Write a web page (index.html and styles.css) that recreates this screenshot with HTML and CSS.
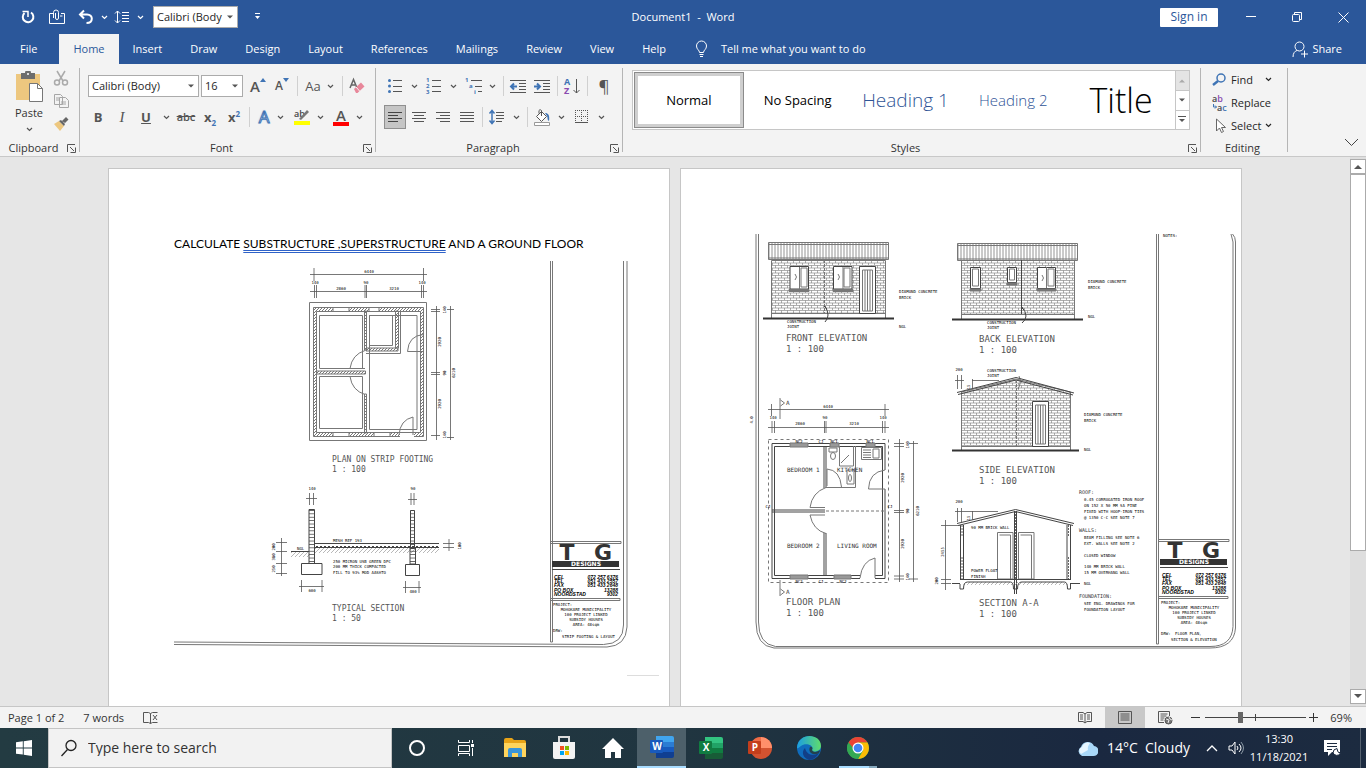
FILE: index.html
```html
<!DOCTYPE html>
<html lang="en">
<head>
<meta charset="utf-8">
<title>Document1 - Word</title>
<link rel="stylesheet" href="styles.css">
</head>
<body>
<svg class="defs" aria-hidden="true">
  <symbol id="chev" viewBox="0 0 7 5"><path d="M1 1l2.500 2.500L6 1" fill="none" stroke="currentColor" stroke-width="1.200"/></symbol>
  <symbol id="tri" viewBox="0 0 6 4"><path d="M0 .5h6L3 3.500z" fill="currentColor"/></symbol>
  <symbol id="launch" viewBox="0 0 9 9"><path d="M.5 8V.5H8M3 3l4 4M8.500 3.500v5h-5" fill="none" stroke="#555"/></symbol>
</svg>
<div class="app">
  <header class="titlebar">
    <div class="quick">
      <button class="qbtn" aria-label="Repeat"><svg width="16" height="16" fill="none" stroke="currentColor" stroke-width="2"><path d="M11 3.500A5.300 5.300 0 1 1 4.500 4"/><path d="M2.500 2.500H8V8" stroke-width="1.500"/></svg></button>
      <button class="qbtn" aria-label="Attach"><svg width="18" height="16" fill="none" stroke="currentColor"><path d="M5 4.500H1.500v10h15v-10H13M12 7h2.500"/><path d="M5.500 9V3.500a2.500 2.500 0 0 1 5 0V9a1.500 1.500 0 0 1-3 0V4"/></svg></button>
      <button class="qbtn" aria-label="Undo"><svg width="16" height="16" fill="none" stroke="currentColor" stroke-width="2"><path d="M6 1.500L2 5.500l4 4M2.500 5.500H9c6.500 0 6.500 8.500-.5 8.500"/></svg></button>
      <button class="drop" aria-label="Undo list"><svg width="7" height="5"><use href="#chev"/></svg></button>
      <button class="qbtn" aria-label="Line spacing"><svg width="16" height="16" fill="none" stroke="currentColor"><path d="M3.500 2v12M1 4.500L3.500 2 6 4.500M1 11.500L3.500 14 6 11.500M8 3.500h7M8 6.500h7M8 9.500h7M8 12.500h7"/></svg></button>
      <button class="drop" aria-label="Spacing list"><svg width="7" height="5"><use href="#chev"/></svg></button>
      <label class="combo quick-font"><select aria-label="Quick font"><option>Calibri (Body</option></select><svg width="6" height="4"><use href="#tri"/></svg></label>
      <button class="drop more" aria-label="Customize"><svg width="7" height="8" fill="currentColor"><path d="M1 0h5v1H1zM1 3h5L3.500 6z"/></svg></button>
    </div>
    <h1 class="doc-title">Document1&nbsp; -&nbsp; Word</h1>
    <div class="window">
      <button class="signin">Sign in</button>
      <button class="wbtn" aria-label="Minimize"><svg width="10" height="10"><path d="M0 4.500h10" stroke="#fff"/></svg></button>
      <button class="wbtn" aria-label="Restore"><svg width="11" height="11" fill="none" stroke="#fff"><rect x=".5" y="2.500" width="7" height="7" rx="1"/><path d="M2.500 2V.5h7v7H8"/></svg></button>
      <button class="wbtn" aria-label="Close"><svg width="11" height="11"><path d="M.5.5l10 10M10.500.5l-10 10" stroke="#fff"/></svg></button>
    </div>
  </header>
  <nav class="tabs">
    <a class="tab file" href="#">File</a><a class="tab active" href="#">Home</a><a class="tab" href="#">Insert</a><a class="tab" href="#">Draw</a><a class="tab" href="#">Design</a><a class="tab" href="#">Layout</a><a class="tab" href="#">References</a><a class="tab" href="#">Mailings</a><a class="tab" href="#">Review</a><a class="tab" href="#">View</a><a class="tab" href="#">Help</a>
    <a class="tell" href="#"><svg width="13" height="18" fill="none" stroke="#fff"><path d="M4.500 12.500c0-2.500-3-3-3-6.500a5 5 0 0 1 10 0c0 3.500-3 4-3 6.500zM4.500 14.500h4M5 16.500h3"/></svg>Tell me what you want to do</a>
    <a class="share" href="#"><svg width="16" height="17" fill="none" stroke="#fff"><circle cx="7.500" cy="5.500" r="4.500"/><path d="M1 16c0-4 2-6 4-6.500M12.500 9.500v7M9 13h7"/></svg>Share</a>
  </nav>

  <section class="ribbon">
    <div class="group clipboard">
      <div class="gbody">
        <button class="paste"><svg width="29" height="32"><path d="M1 3h24v26H1z" fill="#edc77f"/><path d="M6 2h4a3 3 0 0 1 6 0h4v6H6z" fill="#6d6d6d"/><circle cx="13" cy="3" r="1" fill="#fff"/><path d="M14.500 12.500h8l5 5v13h-13z" fill="#fff" stroke="#777"/><path d="M22.500 12.500v5h5" fill="none" stroke="#777"/></svg>Paste<svg width="7" height="5"><use href="#chev"/></svg></button>
        <div class="clip-col">
          <button aria-label="Cut"><svg width="16" height="16" fill="none" stroke="#aaa" stroke-width="1.500"><path d="M4 1l6 10M12 1L6 11"/><circle cx="4" cy="12.500" r="2.500"/><circle cx="12" cy="12.500" r="2.500"/></svg></button>
          <button aria-label="Copy"><svg width="16" height="16" fill="#f3f3f3" stroke="#a6a6a6"><path d="M1.500 1.500h6l2 2v8h-8zM6.500 4.500h6l3 3v7h-9z"/><path d="M3 5h3M3 7h3M8 9h5M8 11h5"/></svg></button>
          <button aria-label="Format painter"><svg width="16" height="16"><path d="M1 8l5-3 5 5-4 5z" fill="#edc77f"/><path d="M6 5l2-1 4 4-1 2zM9 5l4-4 2.500 2.500L12 7z" fill="#666"/></svg></button>
        </div>
      </div>
      <div class="gname"><span>Clipboard</span><button aria-label="Clipboard options"><svg width="9" height="9"><use href="#launch"/></svg></button></div>
    </div>

    <div class="group font">
      <div class="gbody rows">
        <div class="row">
          <label class="combo family"><select aria-label="Font"><option>Calibri (Body)</option></select><svg width="6" height="4"><use href="#tri"/></svg></label>
          <label class="combo size"><select aria-label="Font size"><option>16</option></select><svg width="6" height="4"><use href="#tri"/></svg></label>
          <button class="ib grow" aria-label="Grow font"><b class="big">A</b><svg width="6" height="4"><path d="M0 4l3-4 3 4z" fill="#3f74b5"/></svg></button>
          <button class="ib grow" aria-label="Shrink font"><b>A</b><svg width="6" height="4"><path d="M0 0h6L3 4z" fill="#3f74b5"/></svg></button>
          <i class="sep"></i>
          <button class="ib wide case">Aa<svg width="7" height="5"><use href="#chev"/></svg></button>
          <i class="sep"></i>
          <button class="ib" aria-label="Clear formatting"><svg width="16" height="16"><path d="M1 10L4.500 1.500 8 10M2.500 7H6" fill="none" stroke="#666" stroke-width="1.500"/><path d="M5 11l7-6.500 3.500 4-7 6.500H7z" fill="#e8879a"/><path d="M7 9l4 4.500" stroke="#f3f3f3"/></svg></button>
        </div>
        <div class="row">
          <button class="ib"><b>B</b></button>
          <button class="ib serif"><i>I</i></button>
          <button class="ib"><b><u>U</u></b></button>
          <button class="drop" aria-label="Underline list"><svg width="7" height="5"><use href="#chev"/></svg></button>
          <button class="ib small"><s>abc</s></button>
          <button class="ib"><b>x<sub>2</sub></b></button>
          <button class="ib"><b>x<sup>2</sup></b></button>
          <i class="sep"></i>
          <button class="ib effect">A</button>
          <button class="drop tight" aria-label="Effects list"><svg width="7" height="5"><use href="#chev"/></svg></button>
          <button class="ib mark" aria-label="Highlight"><svg width="18" height="18"><text x="1" y="9" class="marktext">ab</text><path d="M6 11l8-9 2 2-8 8z" fill="#777"/><path d="M1 13h16v4H1z" fill="#ff0"/></svg></button>
          <button class="drop tight" aria-label="Highlight list"><svg width="7" height="5"><use href="#chev"/></svg></button>
          <button class="ib tint">A</button>
          <button class="drop tight" aria-label="Colour list"><svg width="7" height="5"><use href="#chev"/></svg></button>
        </div>
      </div>
      <div class="gname"><span>Font</span><button aria-label="Font options"><svg width="9" height="9"><use href="#launch"/></svg></button></div>
    </div>

    <div class="group para">
      <div class="gbody rows">
        <div class="row">
          <button class="ib" aria-label="Bullets"><svg width="16" height="16"><g fill="#3f74b5"><circle cx="2.500" cy="2.500" r="1.500"/><circle cx="2.500" cy="8" r="1.500"/><circle cx="2.500" cy="13.500" r="1.500"/></g><path d="M6 2.500h9M6 8.500h9M6 13.500h9" stroke="#555"/></svg></button>
          <button class="drop" aria-label="Bullet list"><svg width="7" height="5"><use href="#chev"/></svg></button>
          <button class="ib" aria-label="Numbering"><svg width="16" height="16"><g class="nums"><text x="0" y="4">1</text><text x="0" y="10">2</text><text x="0" y="16">3</text></g><path d="M6 2.500h9M6 8.500h9M6 13.500h9" stroke="#555"/></svg></button>
          <button class="drop" aria-label="Number list"><svg width="7" height="5"><use href="#chev"/></svg></button>
          <button class="ib" aria-label="Multilevel list"><svg width="17" height="17"><g class="nums"><text x="0" y="4">1</text><text x="4" y="10">a</text><text x="9" y="16">i</text></g><path d="M6 2.500h11M10 8.500h7M13 13.500h4" stroke="#555"/></svg></button>
          <button class="drop" aria-label="Level list"><svg width="7" height="5"><use href="#chev"/></svg></button>
          <i class="sep"></i>
          <button class="ib" aria-label="Decrease indent"><svg width="16" height="15"><path d="M0 1.500h16M9 4.500h7M9 7.500h7M9 10.500h7M0 13.500h16" stroke="#555"/><path d="M7 7.500H1M4 4.500l-3 3 3 3" fill="none" stroke="#3f74b5" stroke-width="2"/></svg></button>
          <button class="ib" aria-label="Increase indent"><svg width="16" height="15"><path d="M0 1.500h16M9 4.500h7M9 7.500h7M9 10.500h7M0 13.500h16" stroke="#555"/><path d="M0 7.500h6M3 4.500l3 3-3 3" fill="none" stroke="#3f74b5" stroke-width="2"/></svg></button>
          <i class="sep"></i>
          <button class="ib" aria-label="Sort"><svg width="16" height="17"><text x="0" y="7" class="sorta">A</text><text x="0" y="16" class="sortz">Z</text><path d="M12.500 1v14M9.500 12l3 3 3-3" fill="none" stroke="#555"/></svg></button>
          <i class="sep"></i>
          <button class="ib pil">¶</button>
        </div>
        <div class="row second">
          <button class="ib on" aria-label="Align left"><svg width="14" height="12" stroke="#444"><path d="M0 1.500h14M0 4.500h10M0 7.500h14M0 10.500h10"/></svg></button>
          <button class="ib" aria-label="Centre"><svg width="14" height="12" stroke="#555"><path d="M0 1.500h14M2 4.500h10M0 7.500h14M2 10.500h10"/></svg></button>
          <button class="ib" aria-label="Align right"><svg width="14" height="12" stroke="#555"><path d="M0 1.500h14M4 4.500h10M0 7.500h14M4 10.500h10"/></svg></button>
          <button class="ib" aria-label="Justify"><svg width="14" height="12" stroke="#555"><path d="M0 1.500h14M0 4.500h14M0 7.500h14M0 10.500h14"/></svg></button>
          <i class="sep"></i>
          <button class="ib" aria-label="Line and paragraph spacing"><svg width="16" height="16" fill="none"><path d="M7 3.500h8M7 6.500h8M7 9.500h8M7 12.500h6" stroke="#555"/><path d="M3 2v12M.5 4.500L3 1.500l2.500 3M.5 11.500L3 14.500l2.500-3" stroke="#3f74b5" stroke-width="1.500"/></svg></button>
          <button class="drop" aria-label="Line spacing list"><svg width="7" height="5"><use href="#chev"/></svg></button>
          <i class="sep"></i>
          <button class="ib" aria-label="Shading"><svg width="17" height="17"><path d="M2.500 7.500l5-5 5 5-5 5zM7.500 7V1.500a1.500 1.500 0 0 0-2.500 0v3" fill="#fff" stroke="#555"/><path d="M11 4c3 0 5 2 4 8-2-1-1-3-2-5z" fill="#3f74b5"/><path d="M.5 13.500h15v3H.5z" fill="#fff" stroke="#999"/></svg></button>
          <button class="drop" aria-label="Shading list"><svg width="7" height="5"><use href="#chev"/></svg></button>
          <button class="ib borders" aria-label="Borders"><svg width="14" height="14" fill="none" stroke="#555"><path d="M0 .5h14M0 6.500h14M.5 0v13M6.500 0v13M12.500 0v13" stroke-dasharray="1 1"/><path d="M0 12.500h13"/></svg></button>
          <button class="drop" aria-label="Borders list"><svg width="7" height="5"><use href="#chev"/></svg></button>
        </div>
      </div>
      <div class="gname"><span>Paragraph</span><button aria-label="Paragraph options"><svg width="9" height="9"><use href="#launch"/></svg></button></div>
    </div>

    <div class="group styles">
      <div class="gbody">
        <div class="gallery">
          <button class="style chosen">Normal</button><button class="style">No Spacing</button><button class="style h1s">Heading 1</button><button class="style h2s">Heading 2</button><button class="style ts">Title</button>
          <div class="gscroll">
            <button class="dim" aria-label="Up"><svg width="6" height="4"><path d="M0 3.500h6L3 .5z" fill="#aaa"/></svg></button>
            <button aria-label="Down"><svg width="6" height="4"><use href="#tri"/></svg></button>
            <button aria-label="More styles"><svg width="8" height="7"><path d="M0 .5h8" stroke="#555"/><path d="M1 3h6L4 6z" fill="#555"/></svg></button>
          </div>
        </div>
      </div>
      <div class="gname"><span>Styles</span><button aria-label="Styles options"><svg width="9" height="9"><use href="#launch"/></svg></button></div>
    </div>

    <div class="group editing">
      <div class="gbody edit-list">
        <button><svg width="15" height="14" fill="none" stroke="#3f74b5"><circle cx="9" cy="5" r="4" stroke-width="1.500"/><path d="M6 8l-5 4" stroke-width="2.500"/></svg>Find<svg class="gap" width="7" height="5"><use href="#chev"/></svg></button>
        <button><svg width="15" height="16"><text x="0" y="7" class="rep">a<tspan class="pur">b</tspan></text><text x="5" y="16" class="rep">a<tspan class="blu">c</tspan></text><path d="M1.500 9v3h3M3 10.500l1.500 1.500L3 13.500" fill="none" stroke="#3f74b5"/></svg>Replace</button>
        <button><svg width="15" height="15"><path d="M4.500 1v12l3-3 2 4.500 2-1-2-4h4z" fill="#fff" stroke="#666"/></svg>Select<svg width="7" height="5"><use href="#chev"/></svg></button>
      </div>
      <div class="gname"><span>Editing</span></div>
    </div>
    <div class="ribbon-end"><button aria-label="Collapse ribbon"><svg width="15" height="9"><path d="M1 1l6.500 6.500L14 1" fill="none" stroke="#444"/></svg></button></div>
  </section>

  <main class="workspace">
    <div class="pages">
      <article class="page">
        <p class="heading">CALCULATE <span>SUBSTRUCTURE ,SUPERSTRUCTURE</span> AND A GROUND FLOOR</p>
        <svg class="sheet" viewBox="109 255 560 451">
          <defs>
            <pattern id="hatch" width="3" height="3" patternUnits="userSpaceOnUse"><path d="M0 3L3 0" stroke="#555" stroke-width=".8"/></pattern>
            <pattern id="soil" width="4" height="4" patternUnits="userSpaceOnUse"><path d="M0 4L4 0" stroke="#999" stroke-width=".7"/></pattern>
            <pattern id="course" width="6" height="3.400" patternUnits="userSpaceOnUse"><path d="M0 0H6" stroke="#333" stroke-width="1.400"/></pattern>
            <g id="block" class="block">
              <path d="M550 541.500h71v2h-71M550 598.500h70v2h-70"/>
              <path d="M552 569.500h68" class="dark"/>
              <text x="567" y="560" class="logo">T</text><text x="603" y="560" class="logo">G</text>
              <path d="M552 561h67v6h-67z" class="bar"/>
              <text x="586" y="566" class="designs">DESIGNS</text>
              <g class="contact"><text x="554" y="579">CEL</text><text x="554" y="583">TEL</text><text x="554" y="587">FAX</text><text x="554" y="592">PO BOX</text><text x="554" y="596">NOORDSTAD</text></g>
              <g class="contact end"><text x="618" y="579">072 257 6376</text><text x="618" y="583">051 433 2557</text><text x="618" y="587">051 433 2648</text><text x="618" y="592">13288</text><text x="618" y="596">9302</text></g>
              <g class="tiny"><text x="553" y="606">PROJECT:</text><g class="mid"><text x="586" y="611">MOHOKARE MUNICIPALITY</text><text x="586" y="616">100 PROJECT LINKED</text><text x="586" y="621">SUBSIDY HOUSES</text><text x="586" y="626">AREA: 48sqm</text></g></g>
            </g>
          </defs>
          <g class="ink">
            <path d="M550.500 261v381h2V261M623.500 261v364q0 19-20 19.500L174 642M627 261v366q-1 19-20 20L174 644.500"/>
            <path d="M627 675.500h32" class="faint"/>
            <use href="#block"/>
            <!-- strip footing plan -->
            <path d="M309.500 302.500h117v138h-117z"/>
            <path d="M313.500 307.500h110v129h-110zM316.500 311.500v121h104v-121z" fill="url(#hatch)" fill-rule="evenodd"/>
            <path d="M333 307.500h16v4h-16zM333 432.500h16v4h-16zM369 307.500h10v4h-10zM374 432.500h16v4h-16z" fill="#fff"/>
            <path d="M319.500 315.500h43v53h-43zM319.500 376.500h43v52h-43zM369.500 315.500h47.500v114h-47.500zM369.500 315.500h23v30h-23z"/>
            <path d="M364.500 311h2v39h-2zM364.500 394h2v39h-2zM316.500 371h49v3h-49zM366 348h32v3h-32zM395.500 311h3v37h-3z" fill="url(#hatch)"/>
            <path d="M366 353.500h34.500V311"/>
            <path d="M400 433h14v4h-14z" fill="#fff" class="nos"/>
            <path d="M365 350.500q-13 4-15 18h15M350 376.500q2 14 15 18M423.500 334.500q-15 1-16 17h16M399 435q1-15 14-18v18"/>
            <path d="M310 274.500h117M310 291.500h117M314 268v13M423.500 268v13M314.500 285v13M316.500 285v13M365 285v13M366.500 285v13M421.500 285v13M423.500 285v13M436.500 306v134M450.500 306v134M431 309.500h9M431 311.500h9M431 372.500h9M431 374.500h9M431 435.500h9M447 309.500h7M447 437.500h7" class="dim-line"/>
            <g class="tiny mid"><text x="369" y="273">6440</text><text x="315" y="284">140</text><text x="366" y="284">90</text><text x="422" y="284">140</text><text x="341" y="290">2860</text><text x="394" y="290">3210</text>
              <text transform="translate(446 310) rotate(-90)">140</text><text transform="translate(441 342) rotate(-90)">2920</text><text transform="translate(446 373) rotate(-90)">90</text><text transform="translate(441 404) rotate(-90)">2920</text><text transform="translate(446 435) rotate(-90)">140</text><text transform="translate(455 373) rotate(-90)">6210</text></g>
            <g class="cap1"><text x="332" y="462">PLAN ON STRIP FOOTING</text><text x="332" y="472">1 : 100</text><text x="332" y="611">TYPICAL SECTION</text><text x="332" y="621">1 : 50</text></g>
            <!-- typical section -->
            <path d="M315 548h124v5H315zM291 552h18v5h-18z" fill="url(#soil)" class="nos"/>
            <path d="M309 509.500h5.500v54H309zM410.500 510.500h4v38h-4zM410 548h5.500v16H410z" fill="url(#course)" class="dark"/>
            <path d="M301.500 563.500h20.500v11h-20.500zM405.500 564.500h14v11h-14zM314.500 543.500H439M314.500 547.500H439M291 551.500h18" class="dark"/>
            <path d="M316 546.500h122" stroke-dasharray="2 2" class="dark"/>
            <path d="M306 498.500h11M309.500 493v12M313.500 493v12M408 499.500h9M411 493v12M414 493v12M281.500 538v38M276 542.500h11M276 551.500h11M276 563.500h11M276 573.500h11M299 586.500h25M301.500 580v12M322 580v12M403 587.500h18M405.500 581v12M419 581v12M443 543.500h11M443 547.500h11M449 539v12" class="dim-line"/>
            <g class="tiny"><g class="mid"><text x="312" y="490">140</text><text x="413" y="490">90</text><text x="312" y="592">600</text><text x="413" y="593">400</text><text transform="translate(275 547) rotate(-90)">200</text><text transform="translate(275 557) rotate(-90)">380</text><text transform="translate(275 569) rotate(-90)">250</text><text transform="translate(461 546) rotate(-90)">100</text></g><text x="297" y="550">NGL</text><text x="333" y="542">MESH REF 193</text><text x="333" y="563">250 MICRON USB GREEN DPC</text><text x="333" y="568">200 MM THICK COMPACTED</text><text x="333" y="574">FILL TO 93% MOD AASHTO</text><text x="553" y="632">DRW:</text><text x="562" y="638">STRIP FOOTING &amp; LAYOUT</text></g>
          </g>
        </svg>
      </article>
      <article class="page second-page">
        <svg class="sheet" viewBox="681 169 560 537">
          <defs>
            <pattern id="brick" width="6" height="5" patternUnits="userSpaceOnUse"><path d="M0 .5H6M0 3H6M1.500.5V3M4.500 3v2.500" stroke="#777" stroke-width=".6"/></pattern>
            <pattern id="sheeting" width="3" height="9" patternUnits="userSpaceOnUse"><path d="M1 0V9" stroke="#777" stroke-width=".8"/></pattern>
          </defs>
          <g class="ink">
            <path d="M756 234v388q0 24 18 26H1210q24 0 25.500-20V242q0-5-3-8M758.500 234v388q0 22 17 24.500H1210q22 0 23-20V242l-2-8M1156.500 234v410h2V234"/>
            <use href="#block" transform="translate(608 -2)"/>
            <!-- front elevation -->
            <path d="M768.500 242.500h120v17h-120z" fill="url(#sheeting)"/><path d="M768 244.500h121M768 258h121"/>
            <path d="M771.500 260.500h114v53h-114z" fill="url(#brick)"/><path d="M771.500 313v5M885.500 313v5"/>
            <path d="M763 318.500h131" class="thick"/>
            <path d="M790 266.500h18.500v22.500H790zM833.500 266.500H852v22.500h-18.500zM859.500 266.500h16v47h-16z" fill="#fff" class="dark"/>
            <path d="M799.500 267v22M801 268h6v19h-6zM843 267v22M844 268h6v19h-6zM795 274q3 3 0 6M838 274q3 3 0 6"/>
            <path d="M789 289.500h20v2h-20zM833 289.500h20v2h-20z" fill="#777"/>
            <path d="M862.500 270h10v41h-10zM865 270v41M867.500 270v41M870 270v41"/>
            <path d="M824.500 260v53" stroke-dasharray="3 1"/><path d="M824 306l3 3M825 306q6 10 0 16" class="dark"/>
            <!-- back elevation -->
            <path d="M957.500 243.500h120v17h-120z" fill="url(#sheeting)"/><path d="M957 245.500h121M957 259h121"/>
            <path d="M961.500 260.500h113v54h-113z" fill="url(#brick)"/><path d="M961.500 314v5M1074.500 314v5"/>
            <path d="M952 319.500h131" class="thick"/>
            <path d="M970.500 267.500h10v21h-10zM1007.500 267.500h9v15h-9zM1037.500 267.500h18v21h-18z" fill="#fff" class="dark"/>
            <path d="M972.500 269h6v17h-6zM1009.500 269h5v11h-5zM1046.500 267v21M1048 269h6v17h-6zM1042 275q3 3 0 6"/>
            <path d="M970 289h11v2h-11zM1007 283h10v2h-10zM1037 289h19v2h-19z" fill="#777"/>
            <path d="M1021.500 260v54M1021 307l3 3M1022 307q8 10 0 16" class="dark"/>
            <!-- side elevation -->
            <path d="M961.500 392L1016 379l54.500 13v54.500h-109z" fill="url(#brick)"/><path d="M961.500 446v5M1070.500 446v5"/>
            <path d="M957 392.500L1016 377.500l58 15.500M958 394.500L1016 380l57 15" class="dark"/>
            <path d="M952 450.500h127" class="thick"/>
            <path d="M1032.500 401.500h16v45h-16z" fill="#fff" class="dark"/><path d="M1035.500 405h10v39h-10zM1038 405v39M1040.500 405v39M1043 405v39"/>
            <path d="M1016.500 380v67" stroke-dasharray="3 1"/><path d="M1019 376q3 6-1 13M972 380.500h27M957.500 375v14M961.500 375v14M955 380.500h9M972.500 379v10" class="dim-line"/>
            <!-- floor plan -->
            <path d="M768.500 439.500h120v143h-120z" stroke-dasharray="3 3"/>
            <path d="M772 443.500h113v135H772zM774.500 446.500h108v129h-108z" class="dark"/>
            <path d="M824 446v42M826 446v42M824 533v43M826 533v43M772 510h53M772 512h53" class="dark"/>
            <path d="M826 511h59" stroke-dasharray="3 2"/>
            <path d="M790 443h18v4h-18zM790 575h18v4h-18zM830 443h9v4h-9zM866 443h9v4h-9zM834 575h17v4h-17z" fill="#999"/>
            <path d="M883 470h3v19h-3zM860 575h15v4h-15z" fill="#fff" class="nos"/>
            <path d="M826 487.500q-14 5-16 20h15M810 515h15M810 515q3 15 16 18.500M885 470q-16 2-16.500 19H885M860 578q2-17 15-20v20M827 486v-17q13 1 14.500 18M826 487.500h29.500V446M839.500 446v20h14v-20M841 463l8-8M847 470v14h7v-14z"/>
            <path d="M829 448h8v4h-8zM861.500 447.500h20v12h-20zM873 449h6v9h-6zM863 450h8M863 452.500h8M863 455h8M863 457.500h8"/><ellipse cx="833" cy="456" rx="2.500" ry="3.500"/><ellipse cx="850" cy="478" rx="1.500" ry="3.500"/>
            <path d="M768 409.500h121M768 427.500h121M771.500 404v12M885 404v12M772 421v12M774.500 421v12M824.500 421v12M826 421v12M882.500 421v12M885 421v12M899.500 439v143M913.500 441v141M894 443.500h10M894 446.500h10M894 510.500h10M894 512.500h10M894 576h10M894 579h10M909 443.500h9M909 579h9M780 398v21M780 580v16M780.500 400l4 3-4 3M780.500 589l4 3-4 3" class="dim-line"/>
            <!-- section -->
            <path d="M957 523.500l58.500-14 58.500 14M958 525.500l57.500-14 57.500 14M960.500 525v55M963.500 525v55M1067 525v55M1070.500 525v55M1014.500 511v83M1016.500 511v83" class="dark"/>
            <path d="M962 525v12M962 557v22M1068.500 525v12M1068.500 557v22M1015.500 511v69" stroke-dasharray="2 1" class="fill-wall"/>
            <path d="M963.500 582h104v3h-104z" fill="url(#soil)" class="nos"/>
            <path d="M997.500 532.500H1013V579h-15.500zM999.500 535h11v44M1018.500 532.500H1034V579h-15.500zM1020.500 535h11v44"/>
            <path d="M961 579.500h109M960 584v5h3.500q0-7 4-7h43q3 0 3 7h4q0-7 4-7h43q3 0 3 7h3v-5M952 583.500h8M1070 583.500h10" class="dark"/>
            <path d="M945.500 520v70M941 525.500h20M941 579.500h10M941 583.500h10M957.500 508v14M961.500 508v14M955 511.500h43M972.500 511v9" class="dim-line"/>
            <g class="tiny">
              <text x="787" y="323">CONSTRUCTION</text><text x="787" y="328">JOINT</text><text x="899" y="293">DIAMOND CONCRETE</text><text x="899" y="299">BRICK</text><text x="899" y="328">NGL</text>
              <text x="987" y="324">CONSTRUCTION</text><text x="987" y="329">JOINT</text><text x="1088" y="283">DIAMOND CONCRETE</text><text x="1088" y="289">BRICK</text><text x="1088" y="318">NGL</text>
              <text x="987" y="372">CONSTRUCTION</text><text x="987" y="377">JOINT</text><text x="1084" y="416">DIAMOND CONCRETE</text><text x="1084" y="422">BRICK</text><text x="1084" y="451">NGL</text>
              <text x="1163" y="237">NOTES:</text><text x="971" y="529">90 MM BRICK WALL</text><text x="971" y="572">POWER FLOAT</text><text x="971" y="578">FINISH</text>
              <text x="1084" y="501">0.45 CORRUGATED IRON ROOF</text><text x="1084" y="507">ON 152 X 50 MM SA PINE</text><text x="1084" y="513">FIXED WITH HOOP-IRON TIES</text><text x="1084" y="519">@ 1350 C-C SEE NOTE 7</text>
              <text x="1084" y="539">BEAM FILLING SEE NOTE 6</text><text x="1084" y="545">EXT. WALLS SEE NOTE 2</text><text x="1084" y="557">CLOSED WINDOW</text><text x="1084" y="568">140 MM BRICK WALL</text><text x="1084" y="574">15 MM OVERHANG WALL</text><text x="1084" y="585">NGL</text><text x="1084" y="605">SEE ENG. DRAWINGS FOR</text><text x="1084" y="611">FOUNDATION LAYOUT</text>
              <text x="1161" y="635">DRW:</text><text x="1175" y="635">FLOOR PLAN,</text><text x="1171" y="641">SECTION &amp; ELEVATION</text>
              <g class="mid"><text x="828" y="408">6440</text><text x="773" y="419">140</text><text x="825" y="419">90</text><text x="883" y="419">140</text><text x="800" y="425">2860</text><text x="854" y="425">3210</text><text x="799" y="443">NC2</text><text x="821" y="443">CJ</text><text x="834" y="443">NC1</text><text x="870" y="443">NC1</text><text x="799" y="583">NC2</text><text x="821" y="583">CJ</text><text x="843" y="583">NC2</text><text x="768" y="508">CJ</text><text x="890" y="508">CJ</text><text x="959" y="371">200</text><text x="959" y="503">200</text>
                <text transform="translate(909 445) rotate(-90)">140</text><text transform="translate(904 478) rotate(-90)">2920</text><text transform="translate(909 511) rotate(-90)">90</text><text transform="translate(904 544) rotate(-90)">2920</text><text transform="translate(909 577) rotate(-90)">140</text><text transform="translate(919 511) rotate(-90)">6210</text><text transform="translate(944 552) rotate(-90)">2455</text><text transform="translate(938 581) rotate(-90)">200</text><text transform="translate(970 387) rotate(-90)">15</text><text transform="translate(970 518) rotate(-90)">15</text><text transform="translate(753 420) rotate(-90)">4.0</text></g>
            </g>
            <g class="note"><text x="1079" y="494">ROOF:</text><text x="1079" y="532">WALLS:</text><text x="1079" y="598">FOUNDATION:</text></g>
            <g class="room"><text x="787" y="472">BEDROOM 1</text><text x="837" y="472">KITCHEN</text><text x="787" y="548">BEDROOM 2</text><text x="837" y="548">LIVING ROOM</text><text x="786" y="405">A</text><text x="786" y="594">A</text></g>
            <g class="cap2"><text x="786" y="341">FRONT ELEVATION</text><text x="786" y="352">1 : 100</text><text x="979" y="342">BACK ELEVATION</text><text x="979" y="353">1 : 100</text><text x="979" y="473">SIDE ELEVATION</text><text x="979" y="484">1 : 100</text><text x="786" y="605">FLOOR PLAN</text><text x="786" y="616">1 : 100</text><text x="979" y="606">SECTION A-A</text><text x="979" y="617">1 : 100</text></g>
          </g>
        </svg>
      </article>
    </div>
    <div class="scroll">
      <button aria-label="Scroll up"><svg width="8" height="5"><path d="M0 5l4-4 4 4z" fill="#555"/></svg></button>
      <div class="thumb"></div>
      <button class="down" aria-label="Scroll down"><svg width="8" height="5"><path d="M0 0h8L4 4z" fill="#555"/></svg></button>
    </div>
  </main>

  <footer class="status">
    <span>Page 1 of 2</span><span>7 words</span>
    <svg width="15" height="14" fill="none" stroke="#555"><path d="M7.500 12.500l-2-1H.5v-10h5l2 1zM7.500 2.500l2-1h5M7.500 12.500l2-1h5M10 4l4 5M14 4l-4 5"/></svg>
    <div class="views">
      <button aria-label="Read mode"><svg width="14" height="13" fill="none" stroke="#555"><path d="M7 12l-2-1.500H.5V1.500H5L7 3l2-1.500h4.500v9H9zM7 3v9M2 4h3M2 6h3M2 8h3M9 4h3M9 6h3M9 8h3"/></svg></button>
      <button class="cur" aria-label="Print layout"><svg width="14" height="13" fill="none" stroke="#555"><path d="M.5.500h13v12H.5zM2.500 3h9M2.500 5h9M2.500 7h9M2.500 9h9"/></svg></button>
      <button aria-label="Web layout"><svg width="15" height="14" fill="none" stroke="#555"><path d="M6 11.500H.5V.5h11V5M2.500 3h7M2.500 5h6M2.500 7h4M2.500 9h3"/><circle cx="10.500" cy="9.500" r="3.500" fill="#777"/><path d="M8 8l3 1-1 3M11 6l1 2 2 1" stroke="#eee"/></svg></button>
    </div>
    <button class="zbtn" aria-label="Zoom out"><svg width="9" height="9"><path d="M0 4.500h9" stroke="#333"/></svg></button>
    <input class="zoom" type="range" min="0" max="100" value="34" aria-label="Zoom">
    <button class="zbtn plus" aria-label="Zoom in"><svg width="9" height="9"><path d="M0 4.500h9M4.500 0v9" stroke="#333"/></svg></button>
    <button class="pct">69%</button>
  </footer>

  <div class="taskbar">
    <button class="start" aria-label="Start"><svg width="16" height="16" fill="#fff"><path d="M0 2.300L6.800 1.300V7.500H0zM7.700 1.200L16 0v7.500H7.700zM0 8.400h6.800v6.200L0 13.700zM7.700 8.400H16V16L7.700 14.800z"/></svg></button>
    <label class="search"><svg width="18" height="18" fill="none" stroke="#222" stroke-width="1.300"><circle cx="11" cy="6.500" r="5"/><path d="M7.500 10.500L1.500 17"/></svg><input type="text" placeholder="Type here to search" aria-label="Search"></label>
    <div class="apps">
      <button aria-label="Cortana"><svg width="18" height="18"><circle cx="9" cy="9" r="7" fill="none" stroke="#fff" stroke-width="2"/></svg></button>
      <button aria-label="Task view"><svg width="16" height="16" fill="none" stroke="#fff"><path d="M.5 0v2.500h11V0M.5 5.500h11v6H.5zM.5 16v-2.500h11V16M14.500 0v3M14.500 8v8"/><path d="M13 4h3v3h-3z" fill="#fff" stroke="none"/></svg></button>
      <button aria-label="File Explorer"><svg width="22" height="20"><path d="M0 2q0-2 2-2h6l2 2h10q2 0 2 2v14H0z" fill="#e8a317"/><path d="M0 5h22v14H0z" fill="#ffd45c"/><path d="M4 19v-7q0-2 2-2h10q2 0 2 2v7h-4v-4H8v4z" fill="#3b95d8"/></svg></button>
      <button aria-label="Store"><svg width="24" height="26"><path d="M7 8V2h10v6" fill="none" stroke="#ddd" stroke-width="2"/><path d="M1 7h22v15q0 2-2 2H3q-2 0-2-2z" fill="#f3f3f3"/><path d="M8 11h4v4H8z" fill="#f25022"/><path d="M13 11h4v4h-4z" fill="#7fba00"/><path d="M8 16h4v4H8z" fill="#00a4ef"/><path d="M13 16h4v4h-4z" fill="#ffb900"/></svg></button>
      <button aria-label="Home"><svg width="24" height="22"><path d="M12 1l11 11h-3v9h-6v-6h-4v6H4v-9H1z" fill="#fff"/></svg></button>
      <button class="live" aria-label="Word"><svg width="24" height="22"><path d="M6 0h16q2 0 2 2v4H6z" fill="#41a5ee"/><path d="M6 6h18v5H6z" fill="#2b7cd3"/><path d="M6 11h18v5H6z" fill="#185abd"/><path d="M6 16h18v4q0 2-2 2H6z" fill="#103f91"/><rect y="4" width="13" height="13" rx="1" fill="#185abd"/><text x="7" y="14" class="appletter">W</text></svg></button>
      <button aria-label="Excel"><svg width="24" height="22"><path d="M6 0h16q2 0 2 2v4H6z" fill="#33c481"/><path d="M6 6h18v5H6z" fill="#21a366"/><path d="M6 11h18v5H6z" fill="#107c41"/><path d="M6 16h18v4q0 2-2 2H6z" fill="#185c37"/><rect y="4" width="13" height="13" rx="1" fill="#107c41"/><text x="7" y="14" class="appletter">X</text></svg></button>
      <button aria-label="PowerPoint"><svg width="24" height="22"><circle cx="13" cy="11" r="11" fill="#d35230"/><path d="M13 0a11 11 0 0 1 11 11H13z" fill="#ff8f6b"/><path d="M13 0a11 11 0 0 0-11 11h11z" fill="#ed6c47"/><rect y="4" width="13" height="13" rx="1" fill="#c43e1c"/><text x="7" y="14" class="appletter">P</text></svg></button>
      <button aria-label="Edge"><svg width="24" height="24"><defs><linearGradient id="eg"><stop stop-color="#1b9de2"/><stop offset="1" stop-color="#5fdc6c"/></linearGradient></defs><circle cx="12" cy="12" r="12" fill="#0f6cbd"/><path d="M0 12C1-4 24-3 24 10c0 6-9 7-9 4 3-5-7-8-11-4-2 1-3 3-4 2z" fill="url(#eg)"/><path d="M8 12c2 8 9 8 14 5-2 4-6 7-10 7-6-2-8-8-4-12z" fill="#123f87"/><path d="M13 11c2-1 3 1 2 3 1 3 6 2 8 0 0 3-2 4-4 4-5 1-8-3-6-7z" fill="#23424d"/></svg></button>
      <button class="running" aria-label="Chrome"><svg width="24" height="24"><circle cx="12" cy="12" r="11" fill="#34a853"/><path d="M2.500 6.500A11 11 0 0 1 21.500 6.500H12v11z" fill="#ea4335"/><path d="M12 6.500h9.500A11 11 0 0 1 12 23l5-8.500z" fill="#fbbc05"/><path d="M2.500 6.500A11 11 0 0 0 12 23l4.500-8-9.500-1z" fill="#34a853"/><circle cx="12" cy="12" r="5.500" fill="#fff"/><circle cx="12" cy="12" r="4.300" fill="#4285f4"/></svg></button>
    </div>
    <div class="tray">
      <button class="weather"><svg width="22" height="17"><path d="M6 16a5 5 0 0 1-1-9 7 7 0 0 1 13-1 5 5 0 0 1-1 10z" fill="#a9d8f8"/><path d="M5 14a4 4 0 0 1 1-7 6 6 0 0 1 8-4q-3 4-2 7z" fill="#e8f6ff"/></svg>14°C&nbsp; Cloudy</button>
      <button aria-label="Hidden icons"><svg width="12" height="8" fill="none" stroke="#fff" stroke-width="1.300"><path d="M1 7l5-5 5 5"/></svg></button>
      <button aria-label="Volume"><svg width="17" height="14" fill="none" stroke="#fff"><path d="M1 5h3l3-4v12L4 9H1zM9 5q2 2 0 4M11 3q4 4 0 8"/><path d="M13 1q5 6 0 12" stroke="#8a98a4"/></svg></button>
      <button class="clock"><span>13:30</span><span>11/18/2021</span></button>
      <button class="notify" aria-label="Notifications"><svg width="17" height="17"><path d="M0 0h16v12H8l-4 4v-4H0z" fill="#fff"/><path d="M3 3.500h10M3 6.500h10M3 9.500h5" stroke="#1c2b40"/><path d="M9 13q0-4 4-4.500 0 4 3.500 5-4 4-7.500-.5z" fill="#fff" stroke="#1c2b40"/></svg></button>
      <i class="peek"></i>
    </div>
  </div>
</div>
</body>
</html>
```
FILE: styles.css
```css
* { box-sizing: border-box; }
body { margin: 0; font: 11px/16px "Open Sans", "Noto Sans", sans-serif; color: #262626; }
button, select, input { font: inherit; color: inherit; background: none; border: 0; padding: 0; margin: 0; border-radius: 0; }
button { display: flex; align-items: center; justify-content: center; }
a { color: inherit; text-decoration: none; }
svg { display: block; flex: none; }
.defs { position: absolute; width: 0; height: 0; }
.app { height: 100vh; display: flex; flex-direction: column; overflow: hidden; }

.titlebar { height: 34px; flex: none; background: #2b579a; color: #fff; display: grid; grid-template-columns: 1fr auto 1fr; align-items: center; }
.quick { display: flex; align-items: center; padding-left: 16px; }
.qbtn { width: 24px; height: 24px; }
.qbtn + .qbtn { margin-left: 5px; }
.drop { width: 16px; height: 22px; color: #555; flex: none; }
.titlebar .drop { color: #fff; width: 12px; }
.drop + .qbtn { margin-left: 0; }
.titlebar .more { margin-left: 13px; }
.combo { display: grid; align-items: center; background: #fff; border: 1px solid #ababab; height: 22px; color: #262626; }
.combo select { grid-area: 1 / 1; appearance: none; width: 100%; height: 20px; padding: 0 14px 0 3px; overflow: hidden; }
.combo svg { grid-area: 1 / 1; justify-self: end; margin-right: 4px; pointer-events: none; color: #555; }
.quick-font { width: 85px; margin-left: 7px; }
.doc-title { font-size: 11px; font-weight: 400; margin: 0; }
.window { display: flex; justify-content: flex-end; align-items: center; height: 30px; }
.signin { background: #fff; color: #2b579a; width: 58px; height: 19px; border-radius: 1px; font-size: 12px; margin-right: 10px; }
.wbtn { width: 46px; height: 30px; }

.tabs { height: 30px; flex: none; background: #2b579a; color: #fff; display: flex; align-items: stretch; }
.tab { padding: 0 14px; display: flex; align-items: center; }
.file { padding: 0 22px 0 20px; }
.active { background: #f3f3f3; color: #2b579a; }
.tell { display: flex; align-items: center; gap: 13px; margin-left: 15px; }
.share { display: flex; align-items: center; gap: 4px; margin-left: auto; padding-right: 24px; }

.ribbon { flex: none; height: 93px; background: #f3f3f3; border-bottom: 1px solid #c8c8c8; display: flex; padding: 4px 0; color: #444; }
.group { display: flex; flex-direction: column; border-right: 1px solid #b5b5b5; }
.gbody { flex: 1; display: flex; min-height: 0; }
.gname { display: flex; align-items: center; height: 8px; line-height: 8px; color: #333; padding-right: 3px; }
.gname span { flex: 1; text-align: center; }
.clipboard { width: 80px; }
.font { width: 296px; }
.para { width: 247px; }
.styles { flex: 1; min-width: 300px; }
.editing { width: 87px; }
.paste { flex-direction: column; width: 52px; padding: 3px 0 0 6px; gap: 2px; color: #333; justify-content: flex-start; }
.paste svg:last-child { margin-top: 4px; color: #555; }
.clip-col { display: flex; flex-direction: column; gap: 7px; padding: 2px 0 0 1px; }
.rows { flex-direction: column; gap: 9px; padding-top: 7px; }
.row { display: flex; align-items: center; height: 22px; flex: none; }
.font .row { padding-left: 6px; }
.family { width: 111px; margin: 0 2px; }
.size { width: 42px; margin-right: 3px; }
.ib { width: 24px; height: 24px; flex: none; font-size: 13px; color: #555; }
.ib svg, .edit-list svg { overflow: visible; }
.grow { align-items: flex-start; padding-top: 4px; }
.grow b { font-size: 12px; font-weight: 600; }
.grow .big { font-size: 15px; }
.sep { width: 1px; height: 20px; background: #d0d0d0; margin: 0 2px 0 3px; flex: none; }
.wide { width: 39px; gap: 6px; }
.case { font-size: 13px; }
.serif { font-family: "Liberation Serif", serif; font-size: 15px; }
.small { font-size: 11px; font-weight: 600; }
sub, sup { font-size: 8px; color: #3f74b5; line-height: 0; }
.tight { width: 12px; }
.effect { font-size: 17px; color: #fff; -webkit-text-stroke: 1px #3f74b5; text-shadow: 0 0 2px #8db4e2; width: 20px; margin-left: 2px; }
.mark { margin-left: 4px; }
.marktext { font-size: 9px; font-weight: 600; fill: #444; }
.tint { font-size: 15px; font-weight: 600; width: 16px; height: 17px; border-bottom: 4px solid red; line-height: 12px; margin: 0 4px 0 7px; }
.para .row { padding-left: 7px; }
.para .drop { width: 15px; }
.borders { margin-left: 1px; }
.nums text { font-size: 6px; font-weight: 700; fill: #3f74b5; }
.sorta { font-size: 9px; font-weight: 700; fill: #3f74b5; }
.sortz { font-size: 9px; font-weight: 700; fill: #8a4bb0; }
.pil { font-size: 17px; margin-left: 2px; }
.on { background: #c5c5c5; border: 1px solid #8f8f8f; width: 22px; margin: 0 1px; }
.gallery { flex: 1; display: flex; background: #fff; border: 1px solid #c6c6c6; margin: 2px 10px 2px 9px; height: 60px; color: #000; }
.style { flex: 1 1 0; min-width: 0; font-size: 13px; white-space: nowrap; }
.chosen { margin: 1px 0 1px 1px; border: 1px solid #8b8b8b; box-shadow: inset 0 0 0 3px #cfcfcf; }
.h1s { font-size: 19px; font-weight: 300; color: #2f5496; }
.h2s { font-size: 15px; font-weight: 300; color: #2f5496; }
.ts { font-size: 34px; font-weight: 300; }
.gscroll { width: 14px; display: grid; grid-template-rows: repeat(3, 1fr); border-left: 1px solid #c6c6c6; color: #555; }
.gscroll button + button { border-top: 1px solid #c6c6c6; }
.dim { background: #e4e4e4; }
.edit-list { flex-direction: column; padding: 0 0 0 11px; color: #262626; }
.edit-list button { height: 23px; gap: 4px; justify-content: flex-start; flex: none; }
.edit-list .gap { margin-left: 8px; }
.rep { font-size: 9px; font-weight: 600; fill: #444; }
.pur { fill: #8a4bb0; }
.blu { fill: #3f74b5; }
.ribbon-end { width: 78px; display: flex; align-items: flex-end; justify-content: flex-end; padding: 0 7px 5px 0; }

.workspace { flex: 1; min-height: 0; background: #e6e6e6; display: flex; overflow: hidden; }
.pages { flex: 1; display: flex; justify-content: center; gap: 10px; padding-top: 11px; min-width: 0; }
.page { flex: 0 1 562px; background: #fff; border: 1px solid #c6c6c6; border-bottom: 0; overflow: hidden; padding-top: 65px; }
.second-page { padding-top: 0; }
.heading { margin: 0; padding: 0 0 1px 65px; font: 12px/20px Lato, sans-serif; color: #000; white-space: nowrap; }
.heading span { text-decoration: underline double #2f62c8 1px; text-underline-offset: 2px; }
.sheet { width: 100%; }
.ink, .block { fill: none; stroke: #777; stroke-width: 1; }
.ink text, .block text { stroke: none; fill: #333; font-family: "DejaVu Sans Mono", monospace; }
.dark { stroke: #444; }
.thick { stroke: #333; stroke-width: 2; }
.fill-wall { stroke: #666; }
.nos { stroke: none; }
.faint { stroke: #ddd; }
.dim-line { stroke: #555; stroke-width: .8; }
.tiny text { font-size: 4px; fill: #000; }
.note text { font-size: 5px; }
.room text { font-size: 6px; }
.cap1 text { font-size: 8px; fill: #555; }
.cap2 text { font-size: 9px; fill: #555; }
.mid text { text-anchor: middle; }
.block .logo { font: 700 22px "DejaVu Sans", sans-serif; text-anchor: middle; }
.bar { fill: #333; stroke: none; }
.block .designs { font: 700 6px "DejaVu Sans", sans-serif; fill: #fff; text-anchor: middle; }
.block .contact text { font: italic 700 5px "Liberation Sans", sans-serif; fill: #000; }
.end text { text-anchor: end; }

.scroll { width: 16px; display: flex; flex-direction: column; padding: 2px 0; background: #dedede; }
.scroll button { height: 15px; background: #fff; border: 1px solid #ababab; flex: none; }
.thumb { flex: 0 1 377px; background: #fff; border: 1px solid #ababab; }
.scroll .down { margin-top: auto; }

.status { height: 22px; flex: none; background: #f3f3f3; border-top: 1px solid #c6c6c6; display: flex; align-items: center; padding: 0 14px 0 8px; gap: 19px; color: #333; }
.views { display: flex; margin-left: auto; align-self: stretch; }
.views button { width: 40px; }
.views .cur { background: #c8c8c8; }
.status .zbtn { margin: 0 -16px; width: 14px; }
.status .plus { margin: 0 -9px 0 -19px; }
.zoom { appearance: none; width: 101px; height: 12px; background: linear-gradient(#444, #444) center / 1px 7px no-repeat, linear-gradient(#444, #444) center / 100% 1px no-repeat; }
.zoom::-webkit-slider-thumb { appearance: none; width: 5px; height: 11px; background: #666; }

.taskbar { height: 40px; flex: none; display: flex; background: linear-gradient(90deg, #233b42, #203540 50%, #1a2840 80%, #1c2b40); color: #fff; }
.start { width: 48px; }
.search { width: 344px; background: #f2f2f2; border: 1px solid #c4c4c4; display: flex; align-items: center; gap: 10px; padding-left: 11px; color: #222; }
.search input { flex: 1; min-width: 0; font-size: 14px; outline: 0; }
.search input::placeholder { color: #333; opacity: 1; }
.apps { display: flex; }
.apps button { width: 49px; }
.apps .live { background: #4d606a; border-bottom: 2px solid #a8dcff; }
.apps .running { background: linear-gradient(90deg, #a8dcff 30px, #86a9be 0) center bottom / 38px 2px no-repeat; }
.appletter { font: 700 10px "Open Sans", sans-serif; fill: #fff; text-anchor: middle; }
.tray { margin-left: auto; display: flex; align-items: stretch; }
.tray > button { width: 24px; }
.tray .weather { width: auto; font-size: 14px; gap: 9px; margin-right: 10px; }
.tray .clock { flex-direction: column; width: 62px; line-height: 18px; }
.tray .notify { width: 44px; }
.peek { width: 1px; background: #55616f; margin: 0 5px 0 6px; }
```
